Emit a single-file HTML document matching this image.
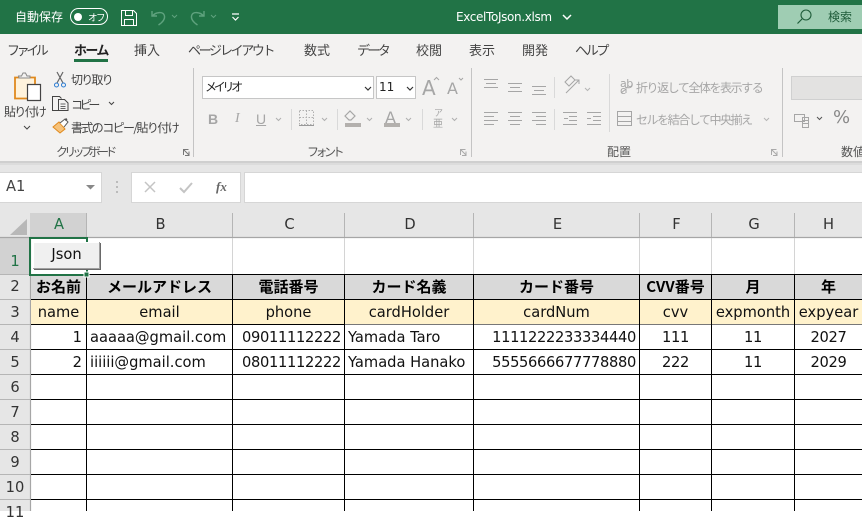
<!DOCTYPE html>
<html lang="ja"><head><meta charset="utf-8"><title>ExcelToJson.xlsm</title>
<style>
html,body{margin:0;padding:0}
body{width:862px;height:511px;position:relative;overflow:hidden;background:#fff;font-family:"Liberation Sans","Noto Sans CJK JP",sans-serif}
div,span{position:absolute;white-space:nowrap}
svg{position:absolute;left:0;top:0}
.j{font-family:"Noto Sans CJK JP","Liberation Sans",sans-serif}
.tab{top:41px;font-size:13px;line-height:18px;color:#444;font-family:"Noto Sans CJK JP",sans-serif}
.rb{font-size:12px;line-height:16px;color:#444;font-family:"Noto Sans CJK JP",sans-serif}
.dis{color:#a6a6a6}
.gl{font-size:12px;line-height:14px;color:#555;font-family:"Noto Sans CJK JP",sans-serif}
.ch{top:213px;height:24px;line-height:24px;text-align:center;font-family:"DejaVu Sans",sans-serif;font-size:14.67px;color:#333}
.rh{left:0;width:30px;text-align:center;height:25px;line-height:27px;font-family:"DejaVu Sans",sans-serif;font-size:14.67px;color:#333}
.c{height:25px;line-height:27px;text-align:center;font-family:"DejaVu Sans",sans-serif;font-size:14.67px;color:#111}
.b{font-family:"Noto Sans CJK JP","DejaVu Sans",sans-serif;font-weight:700;color:#000;font-size:15px;line-height:25px}
.r{text-align:right}.l{text-align:left}
.n{letter-spacing:-.33px}
</style></head>
<body>
<!-- title bar -->
<div style="left:0;top:0;width:862px;height:34px;background:#217346"></div>
<div class="j" style="left:15px;top:8px;font-size:12px;line-height:18px;color:#fff">自動保存</div>
<div style="left:70px;top:8px;width:36px;height:15px;border:1.5px solid #fff;border-radius:9px"></div>
<div style="left:74px;top:13px;width:8px;height:8px;border-radius:50%;background:#fff"></div>
<div class="j" style="left:88px;top:10px;font-size:9.5px;line-height:14px;color:#fff;letter-spacing:-1.5px">オフ</div>
<div style="left:456px;top:8px;font-family:'DejaVu Sans',sans-serif;font-size:12px;line-height:18px;color:#fff;letter-spacing:-.35px">ExcelToJson.xlsm</div>
<div style="left:778px;top:5px;width:84px;height:24px;background:#9fcdb3"></div>
<div class="j" style="left:828px;top:8px;font-size:12px;line-height:18px;color:#1f5c3a">検索</div>
<!-- ribbon -->
<div style="left:0;top:34px;width:862px;height:127px;background:#f3f2f1"></div>
<div style="left:0;top:161px;width:862px;height:52px;background:#e6e6e6"></div>
<div style="left:0;top:161px;width:862px;height:2px;background:#cfcfcf"></div>
<div style="left:0;top:163px;width:862px;height:2px;background:#dcdcdc"></div>
<div class="tab" style="left:7px;letter-spacing:-3.4px">ファイル</div>
<div class="tab" style="left:74px;font-weight:700;color:#222;letter-spacing:-1.6px">ホーム</div>
<div style="left:74px;top:59px;width:34px;height:3px;background:#217346"></div>
<div class="tab" style="left:134px">挿入</div>
<div class="tab" style="left:188px;letter-spacing:-2.4px">ページ レイアウト</div>
<div class="tab" style="left:304px">数式</div>
<div class="tab" style="left:357px;letter-spacing:-2.6px">データ</div>
<div class="tab" style="left:416px">校閲</div>
<div class="tab" style="left:469px">表示</div>
<div class="tab" style="left:522px">開発</div>
<div class="tab" style="left:575px;letter-spacing:-2.3px">ヘルプ</div>

<div class="rb" style="left:4px;top:104px;letter-spacing:-1.7px">貼り付け</div>
<div class="rb" style="left:71px;top:72px;letter-spacing:-1.8px">切り取り</div>
<div class="rb" style="left:71px;top:97px;letter-spacing:-3.300px">コピー</div>
<div class="rb" style="left:71px;top:120px;letter-spacing:-1.6px">書式のコピー/貼り付け</div>
<div class="gl" style="left:56px;top:145px;letter-spacing:-3.8px">クリップボード</div>
<div class="gl" style="left:307px;top:145px;letter-spacing:-3.5px">フォント</div>
<div class="gl" style="left:607px;top:145px">配置</div>
<div class="gl" style="left:841px;top:145px">数値</div>

<!-- font boxes -->
<div style="left:202px;top:76px;width:170px;height:21px;background:#fff;border:1px solid #c6c6c6"></div>
<div style="left:376px;top:76px;width:38px;height:21px;background:#fff;border:1px solid #c6c6c6"></div>
<div class="j" style="left:205px;top:79px;font-size:12px;line-height:16px;color:#222;letter-spacing:-3.3px">メイリオ</div>
<div style="left:379px;top:79px;font-family:'DejaVu Sans',sans-serif;font-size:12px;line-height:16px;color:#222">11</div>
<div style="left:208px;top:110px;font:700 14px/18px 'Liberation Sans';color:#a6a6a6">B</div>
<div style="left:235px;top:110px;font:italic 14px/18px 'Liberation Serif';color:#a6a6a6">I</div>
<div style="left:256px;top:110px;font:14px/18px 'Liberation Sans';color:#a6a6a6;text-decoration:underline">U</div>
<div style="left:422px;top:76px;font:20px/24px 'DejaVu Sans';color:#a6a6a6">A</div>
<div style="left:447px;top:79px;font:16px/20px 'DejaVu Sans';color:#a6a6a6">A</div>
<div style="left:385px;top:108px;font:16px/20px 'DejaVu Sans';color:#a6a6a6">A</div>
<div class="j" style="left:434px;top:108px;font-size:9px;line-height:10px;color:#a6a6a6">ア</div>
<div class="j" style="left:433px;top:117px;font-size:10px;line-height:11px;color:#a6a6a6">亜</div>
<!-- alignment text -->
<div class="rb dis" style="left:636px;top:80px;letter-spacing:-1.45px">折り返して全体を表示する</div>
<div class="rb dis" style="left:636px;top:112px;letter-spacing:-1.45px">セルを結合して中央揃え</div>
<div style="left:620px;top:79px;font:11px/9px 'DejaVu Sans';color:#a6a6a6;letter-spacing:-.5px">ab</div>
<div style="left:620px;top:86px;font:11px/9px 'DejaVu Sans';color:#a6a6a6">c</div>
<div style="left:791px;top:76px;width:71px;height:22px;background:#e3e2e1;border:1px solid #d0d0d0"></div>
<div style="left:833px;top:107px;font:18px/22px 'DejaVu Sans';color:#888">%</div>

<!-- formula bar -->
<div style="left:-1px;top:172px;width:101px;height:29px;background:#fff;border:1px solid #d6d6d6"></div>
<div style="left:6px;top:177px;font:14.67px/20px 'DejaVu Sans';color:#444">A1</div>
<div style="left:131px;top:172px;width:108px;height:29px;background:#fff;border:1px solid #d6d6d6"></div>
<div style="left:244px;top:172px;width:620px;height:29px;background:#fff;border:1px solid #d6d6d6"></div>
<div style="left:216px;top:177px;font:italic 700 13px/20px 'Liberation Serif';color:#666">fx</div>

<!-- icons -->
<svg width="862" height="205" viewBox="0 0 862 205" fill="none">
 <!-- save -->
 <path d="M121.5 10.5h12l3 3v12h-15zM125.5 10.5v5h7v-5M124.5 25.5v-6h9v6" stroke="#fff" stroke-width="1"/>
 <!-- undo/redo -->
 <path d="M152 11v5h5M152.500 16c3-4 11-5 12-0 .7 4-3 7-6 9" stroke="#5fa27e" stroke-width="1.4"/>
 <path d="M172 15l2.500 2.500 2.500-2.500M211 15l2.500 2.500 2.500-2.500" stroke="#5fa27e"/>
 <path d="M204 11v5h-5M203.500 16c-3-4-11-5-12-0-.7 4 3 7 6 9" stroke="#5fa27e" stroke-width="1.4"/>
 <path d="M232 14h7M232.500 17l3 3 3-3" stroke="#fff" stroke-width="1.2"/>
 <path d="M563 15l4 4 4-4" stroke="#fff" stroke-width="1.5"/>
 <!-- search -->
 <circle cx="806" cy="15" r="5" stroke="#1f5c3a" stroke-width="1.100"/>
 <path d="M802 19l-4.500 4.500" stroke="#1f5c3a" stroke-width="1.200"/>
 <!-- paste -->
 <path d="M15 77.500h20v21h-20z" fill="#fff3dc" stroke="#e08a1e" stroke-width="1.800"/>
 <path d="M19 78h11v-2h-3l-1.500-3h-2.500l-1.500 3h-3z" fill="#f3f2f1" stroke="#888"/>
 <path d="M27.500 84.500h13v16h-13z" fill="#fff" stroke="#444" stroke-width="1.200"/>
 <path d="M24 126l3 3 3-3" stroke="#444"/>
 <!-- scissors -->
 <path d="M57 72l6 11M63 72l-6 11" stroke="#666" stroke-width="1.200"/>
 <circle cx="56.500" cy="85" r="2" stroke="#2b7cd3"/><circle cx="63.500" cy="85" r="2" stroke="#2b7cd3"/>
 <!-- copy -->
 <path d="M58 110.500h-5.500v-14h7l2 2" stroke="#444"/>
 <path d="M58.500 99.500h6l3.500 3.500v7.500h-9.500z" fill="#f3f2f1" stroke="#444"/>
 <path d="M60.500 104h5M60.500 106.500h5M60.500 108.500h5" stroke="#666"/>
 <path d="M109 102l2.500 2.500 2.500-2.500" stroke="#444"/>
 <!-- painter -->
 <path d="M53 127l6-5 6 7-5 4z" fill="#f6c27a" stroke="#e08a1e"/>
 <path d="M60 123l5-4 3 3-4 5" fill="#fff" stroke="#555"/>
 <path d="M65 120l2-1" stroke="#555" stroke-width="2"/>
 <!-- launchers -->
 <g stroke="#777"><path d="M183.500 155v-5.500h5M184 150l5 5M189 151.500v4h-4"/></g>
 <g stroke="#aaa"><path d="M460.500 155v-5.500h5M461 150l5 5M466 151.500v4h-4M771.500 155v-5.500h5M772 150l5 5M777 151.500v4h-4"/></g>
 <!-- separators -->
 <g stroke="#c4c4c4">
  <path d="M193.500 68v89M471.500 68v89M782.500 68v89"/>
 </g>
 <g stroke="#d9d9d9">
  <path d="M291.500 109v21M337.500 109v21M422.500 109v21M554.500 77v21M554.500 109v21M609.500 74v58"/>
 </g>
 <!-- size chevrons -->
 <path d="M365 87l3 3 3-3M407 87l3 3 3-3" stroke="#333" stroke-width="1.200"/>
 <path d="M434 80l2.500-2.500 2.500 2.500M459 78l2 2 2-2" stroke="#a6a6a6"/>
 <!-- font row -->
 <path d="M276 118l2.500 2.500 2.500-2.500M322 118l2.500 2.500 2.500-2.500M367 118l2.500 2.500 2.500-2.500M406 118l2.500 2.500 2.500-2.500M452 118l2.500 2.500 2.500-2.500" stroke="#b0b0b0"/>
 <path d="M299.500 110.500h14v14h-14zM306.500 110.500v14M299.500 117.500h14" stroke="#b0b0b0" stroke-dasharray="1.500 1.500"/>
 <path d="M299 125.500h15" stroke="#999"/>
 <path d="M345 116l5-5 5 5-4 4h-2z" stroke="#a6a6a6" stroke-width="1.200"/>
 <rect x="345" y="123" width="16" height="4" fill="#b3b0ad"/>
 <rect x="384" y="123" width="16" height="4" fill="#b3b0ad"/>
 <!-- alignment -->
 <g stroke="#a6a6a6">
  <path d="M484 79.500h14M486 83.500h10M484 87.500h14"/>
  <path d="M508 83.500h14M510 87.500h10M508 91.500h14"/>
  <path d="M532 86.500h14M534 90.500h10M532 94.500h14"/>
  <path d="M484 112.500h14M484 116.500h10M484 120.500h14M484 124.500h10"/>
  <path d="M508 112.500h14M510 116.500h10M508 120.500h14M510 124.500h10"/>
  <path d="M532 112.500h14M536 116.500h10M532 120.500h14M536 124.500h10"/>
  <path d="M563 112.500h14M569 116.500h8M569 120.500h8M563 124.500h14M564 118.500h4"/>
  <path d="M587 112.500h14M593 116.500h8M593 120.500h8M587 124.500h14M587 118.500h4"/>
  <path d="M566 93l13-13M575 80h4v4M565 82l6-6 4 4-6 6z"/>
  <path d="M585 88l2.500 2.500 2.500-2.500M764 118l2.500 2.500 2.500-2.500" stroke="#b5b5b5"/>
  <path d="M625 87c5 2 8 0 7-4M621 93l5-4-0 4" stroke="#a6a6a6"/>
  <path d="M617.500 111.500h14v14h-14zM617.500 116.500h14M617.500 121.500h14"/>
  <path d="M794.500 114.500h10v7h-10zM802.500 117.500h6v10h-6zM802 120.500h7M802 123.500h7"/>
 </g>
 <path d="M817 117l2.500 2.500 2.500-2.500" stroke="#555"/>
 <!-- formula bar -->
 <path d="M86 185h9l-4.500 4.500z" fill="#888"/>
 <path d="M116 181h2v2h-2zM116 186h2v2h-2zM116 191h2v2h-2z" fill="#bbb"/>
 <path d="M145 182l10 10M155 182l-10 10" stroke="#c4c4c4" stroke-width="1.500"/>
 <path d="M180 188l4 4 8-9" stroke="#c4c4c4" stroke-width="2"/>
</svg>

<!-- sheet headers -->
<div style="left:0;top:203px;width:862px;height:34px;background:#e6e6e6"></div>
<div style="left:30px;top:213px;width:56px;height:24px;background:#d2d2d2"></div>
<div style="left:0;top:238px;width:30px;height:36px;background:#d2d2d2"></div>
<div style="left:0;top:274px;width:30px;height:237px;background:#e6e6e6"></div>
<svg width="862" height="511" viewBox="0 0 862 511" fill="none">
 <path d="M27 219v16H10z" fill="#b8b8b8"/>
 <path d="M0 237.500h862" stroke="#a6a6a6" stroke-width="1.200"/>
 <path d="M30.500 237v274" stroke="#a6a6a6" stroke-width="1.200"/>
 <g stroke="#b5b5b5"><path d="M86.500 213v24M232.500 213v24M344.500 213v24M473.500 213v24M639.500 213v24M711.500 213v24M794.500 213v24"/></g>
 <g stroke="#b5b5b5"><path d="M0 274.500h30M0 299.500h30M0 324.500h30M0 349.500h30M0 374.500h30M0 399.500h30M0 424.500h30M0 449.500h30M0 474.500h30M0 499.500h30"/></g>
</svg>
<div class="ch" style="left:31px;width:56px;color:#217346">A</div>
<div class="ch" style="left:88px;width:145px">B</div>
<div class="ch" style="left:234px;width:111px">C</div>
<div class="ch" style="left:346px;width:128px">D</div>
<div class="ch" style="left:475px;width:165px">E</div>
<div class="ch" style="left:641px;width:71px">F</div>
<div class="ch" style="left:713px;width:82px">G</div>
<div class="ch" style="left:795px;width:67px">H</div>
<div class="rh" style="top:248px;color:#217346">1</div>
<div class="rh" style="top:273px">2</div>
<div class="rh" style="top:299px">3</div>
<div class="rh" style="top:324px">4</div>
<div class="rh" style="top:349px">5</div>
<div class="rh" style="top:374px">6</div>
<div class="rh" style="top:399px">7</div>
<div class="rh" style="top:424px">8</div>
<div class="rh" style="top:449px">9</div>
<div class="rh" style="top:474px">10</div>
<div class="rh" style="top:499px">11</div>

<!-- cells bg -->
<div style="left:31px;top:275px;width:831px;height:24px;background:#d9d9d9"></div>
<div style="left:31px;top:300px;width:831px;height:24px;background:#fff2cc"></div>
<svg width="862" height="511" viewBox="0 0 862 511" fill="none">
 <g stroke="#d4d4d4"><path d="M232.500 238v36M344.500 238v36M473.500 238v36M639.500 238v36M711.500 238v36M794.500 238v36"/></g>
 <g stroke="#000">
  <path d="M31 274.500h831M31 299.500h831M31 349.500h831M31 374.500h831M31 399.500h831M31 424.500h831M31 449.500h831M31 474.500h831M31 499.500h831M31 324.500h313"/>
  <path d="M86.500 274v237M232.500 274v237M344.500 274v237M473.500 274v237M639.500 274v237M711.500 274v237M794.500 274v237"/>
 </g>
 <path d="M345 324.500h128M474 324.500h165M640 324.500h71M712 324.500h82M795 324.500h67" stroke="#777"/>
 <path d="M30 238h57v37H30z" stroke="#217346" stroke-width="2"/>
 <rect x="84" y="272" width="5" height="5" fill="#217346" stroke="#fff"/>
</svg>
<!-- button -->
<div style="left:33px;top:242px;width:67px;height:27px;background:#f0f0f0;box-shadow:inset -1px -1px 0 #a0a0a0,inset 1px 1px 0 #fff,1px 1px 0 #696969"></div>
<div style="left:33px;top:242px;width:67px;height:27px;text-align:center;font:14.67px/26px 'DejaVu Sans',sans-serif;color:#111">Json</div>

<!-- row 2 -->
<div class="c b" style="left:31px;top:274px;width:55px">お名前</div>
<div class="c b" style="left:87px;top:274px;width:145px">メールアドレス</div>
<div class="c b" style="left:233px;top:274px;width:111px">電話番号</div>
<div class="c b" style="left:345px;top:274px;width:128px">カード名義</div>
<div class="c b" style="left:474px;top:274px;width:165px">カード番号</div>
<div class="c b" style="left:640px;top:274px;width:71px">CVV番号</div>
<div class="c b" style="left:712px;top:274px;width:82px">月</div>
<div class="c b" style="left:795px;top:274px;width:67px">年</div>
<!-- row 3 -->
<div class="c" style="left:31px;top:299px;width:55px">name</div>
<div class="c" style="left:87px;top:299px;width:145px">email</div>
<div class="c" style="left:233px;top:299px;width:111px">phone</div>
<div class="c" style="left:345px;top:299px;width:128px">cardHolder</div>
<div class="c" style="left:474px;top:299px;width:165px">cardNum</div>
<div class="c" style="left:640px;top:299px;width:71px">cvv</div>
<div class="c" style="left:712px;top:299px;width:82px">expmonth</div>
<div class="c" style="left:795px;top:299px;width:67px">expyear</div>
<!-- row 4 -->
<div class="c r" style="left:31px;top:324px;width:51px">1</div>
<div class="c l" style="left:90px;top:324px;width:140px">aaaaa@gmail.com</div>
<div class="c r n" style="left:233px;top:324px;width:108px">09011112222</div>
<div class="c l" style="left:348px;top:324px;width:124px">Yamada Taro</div>
<div class="c r n" style="left:474px;top:324px;width:162px">1111222233334440</div>
<div class="c n" style="left:640px;top:324px;width:71px">111</div>
<div class="c n" style="left:712px;top:324px;width:82px">11</div>
<div class="c n" style="left:795px;top:324px;width:67px">2027</div>
<!-- row 5 -->
<div class="c r" style="left:31px;top:349px;width:51px">2</div>
<div class="c l" style="left:90px;top:349px;width:140px">iiiiii@gmail.com</div>
<div class="c r n" style="left:233px;top:349px;width:108px">08011112222</div>
<div class="c l" style="left:348px;top:349px;width:124px">Yamada Hanako</div>
<div class="c r n" style="left:474px;top:349px;width:162px">5555666677778880</div>
<div class="c n" style="left:640px;top:349px;width:71px">222</div>
<div class="c n" style="left:712px;top:349px;width:82px">11</div>
<div class="c n" style="left:795px;top:349px;width:67px">2029</div>
</body></html>
